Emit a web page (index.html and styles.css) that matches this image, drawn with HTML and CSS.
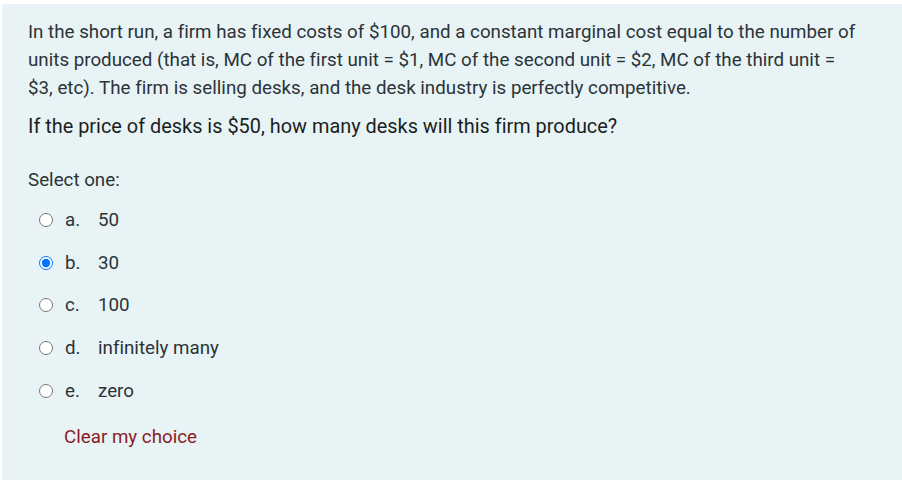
FILE: index.html
```html
<!DOCTYPE html>
<html>
<head>
<meta charset="utf-8">
<link rel="stylesheet" href="styles.css">
</head>
<body>
<div class="que">
  <div class="qtext">
    <p class="intro">In the short run, a firm has fixed costs of $100, and a constant marginal cost equal to the number of units produced (that is, MC of the first unit = $1, MC of the second unit = $2, MC of the third unit = $3, etc). The firm is selling desks, and the desk industry is perfectly competitive.</p>
    <p class="ask">If the price of desks is $50, how many desks will this firm produce?</p>
  </div>
  <div class="prompt">Select one:</div>
  <div class="answers">
    <label class="opt"><input type="radio" name="q"><span class="letter">a.</span><span class="text">50</span></label>
    <label class="opt"><input type="radio" name="q" checked><span class="letter">b.</span><span class="text">30</span></label>
    <label class="opt"><input type="radio" name="q"><span class="letter">c.</span><span class="text">100</span></label>
    <label class="opt"><input type="radio" name="q"><span class="letter">d.</span><span class="text">infinitely many</span></label>
    <label class="opt"><input type="radio" name="q"><span class="letter">e.</span><span class="text">zero</span></label>
  </div>
  <a class="clear" href="#">Clear my choice</a>
</div>
</body>
</html>
```
FILE: styles.css
```css
html, body {
  margin: 0;
  padding: 0;
  background: #ffffff;
}
body {
  font-family: Roboto, "Liberation Sans", sans-serif;
  font-size: 18.75px;
  color: #1d2125;
  font-variant-ligatures: none;
}
.que {
  margin: 4px 0 0 2px;
  height: 476px;
  box-sizing: border-box;
  background: #e7f3f5;
  padding: 14px 44px 0 26px;
}
.qtext p {
  margin: 0;
  line-height: 28px;
}
.intro {
  color: #2c3338;
}
.ask {
  margin-top: 11px !important;
  color: #1a1e22;
  font-size: 19.9px;
}
.prompt {
  margin-top: 25px;
  line-height: 28px;
  color: #2c3338;
}
.answers {
  display: flex;
  flex-direction: column;
  padding-left: 11px;
  margin-top: 5px;
}
.opt {
  display: flex;
  align-items: center;
  height: 42.6px;
  color: #2c3338;
}
.opt input {
  margin: 0 12px 0 0;
  width: 14px;
  height: 14px;
}
.letter {
  width: 33px;
}
.clear {
  display: inline-block;
  margin-top: 11px;
  margin-left: 36px;
  color: #8a1c24;
  text-decoration: none;
  line-height: 28px;
}
```
